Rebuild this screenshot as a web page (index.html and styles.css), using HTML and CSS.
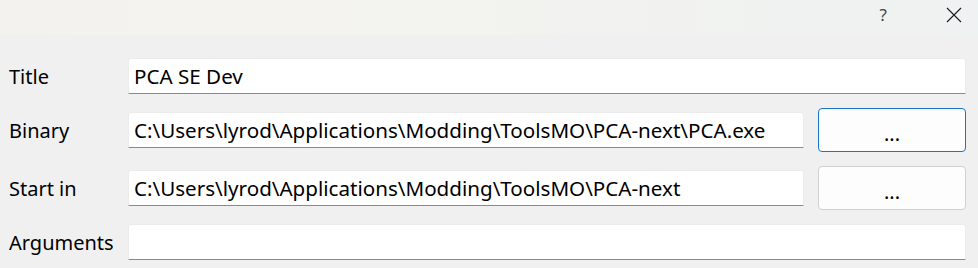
FILE: index.html
```html
<!DOCTYPE html>
<html lang="en">
<head>
    <meta charset="UTF-8">
    <meta name="viewport" content="width=device-width, initial-scale=1.0">
    <title>Modify Executable</title>
    <link rel="stylesheet" href="styles.css">
</head>
<body>
    <div class="titlebar">
        <span class="help">?</span>
        <span class="close">
            <svg width="16" height="16" viewBox="0 0 16 16"><path d="M1 1 L15 15 M15 1 L1 15" stroke="#1a1a1a" stroke-width="1.1" fill="none"/></svg>
        </span>
    </div>
    <form class="form">
        <label for="title">Title</label>
        <input type="text" id="title" class="field wide" value="PCA SE Dev">

        <label for="binary">Binary</label>
        <input type="text" id="binary" class="field" value="C:\Users\lyrod\Applications\Modding\ToolsMO\PCA-next\PCA.exe">
        <button type="button" class="browse focused">...</button>

        <label for="startin">Start in</label>
        <input type="text" id="startin" class="field" value="C:\Users\lyrod\Applications\Modding\ToolsMO\PCA-next">
        <button type="button" class="browse">...</button>

        <label for="args">Arguments</label>
        <input type="text" id="args" class="field wide" value="">
    </form>
</body>
</html>
```

FILE: styles.css
```css
body {
    font-family: 'Noto Sans', 'Open Sans', sans-serif;
    margin: 0;
    padding: 0;
    background: #f0f0f0;
    color: #000;
    height: 268px;
    overflow: hidden;
}
.titlebar {
    height: 35px;
    background: linear-gradient(90deg, #f3f2ee, #f3f3ef 40%, #eff2f2);
    display: flex;
    justify-content: flex-end;
    align-items: center;
    padding-right: 16px;
}
.help {
    font-size: 17px;
    color: #444;
    margin-right: 59px;
    margin-top: -6px;
}
.close {
    display: flex;
    margin-top: -6px;
}
.form {
    display: grid;
    grid-template-columns: 105px 1fr 148px;
    grid-template-rows: 36px 44px 44px 36px;
    gap: 14px;
    padding: 23px 12px 0 9px;
    align-items: center;
}
.form label {
    font-size: 20px;
}
.field {
    font-family: inherit;
    font-size: 20.6px;
    color: #000;
    height: 36px;
    box-sizing: border-box;
    padding: 0 5px;
    margin: 0;
    background: #fff;
    border: 1px solid #ececec;
    border-bottom: 1px solid #8a8a8a;
    border-radius: 3px 3px 0 0;
    outline: none;
    min-width: 0;
}
.field.wide {
    grid-column: 2 / 4;
}
.browse {
    font-family: inherit;
    font-size: 20px;
    height: 44px;
    background: #fdfdfd;
    border: 1px solid #d0d0d0;
    border-radius: 4px;
    padding: 6px 0 0;
    color: #000;
}
.browse.focused {
    border-color: #1a74c8;
}
```
